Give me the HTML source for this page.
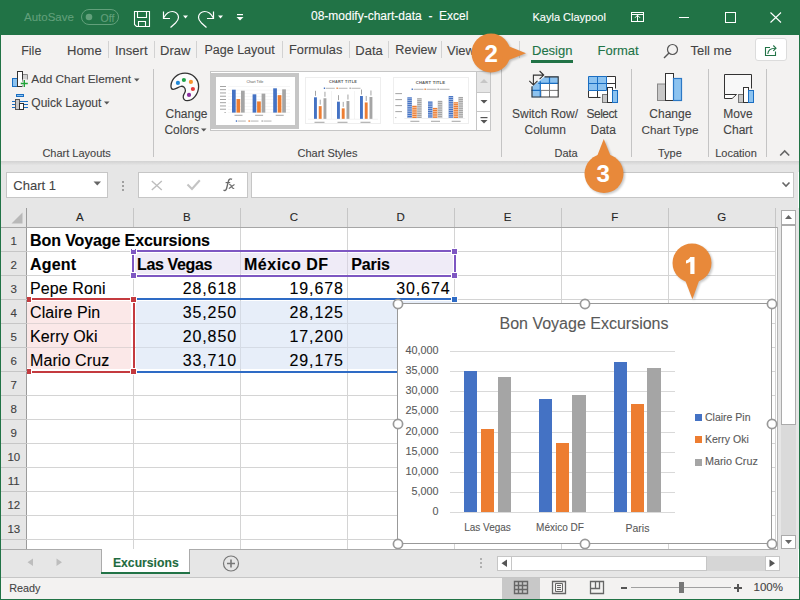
<!DOCTYPE html>
<html><head><meta charset="utf-8"><style>
html,body{margin:0;padding:0;width:800px;height:600px;overflow:hidden;background:#fff;}
body{position:relative;font-family:"Liberation Sans", sans-serif;}
.t{position:absolute;line-height:1;white-space:pre;-webkit-text-stroke:0.1px currentColor;}
.r{position:absolute;box-sizing:border-box;}
svg.r{overflow:visible;}
</style></head><body>
<div class="r" style="left:0px;top:0px;width:800px;height:35px;background:#217346;"></div>
<div class="t" style="left:24.00px;top:11.67px;font-size:11.5px;color:#62a07b;">AutoSave</div>
<svg class="r" style="left:80px;top:8px;" width="40" height="18" viewBox="0 0 40 18"><rect x="1.5" y="1.5" width="37" height="15" rx="7.5" fill="none" stroke="#62a07b" stroke-width="1"/><circle cx="9" cy="9" r="3.3" fill="#62a07b"/></svg>
<div class="t" style="left:100.50px;top:12.51px;font-size:10.5px;color:#62a07b;">Off</div>
<svg class="r" style="left:133px;top:10px;" width="18" height="18" viewBox="0 0 18 18"><path d="M1.5 1.5 H16.5 V16.5 H3.5 L1.5 14.5 Z" fill="none" stroke="#fff" stroke-width="1.1"/><path d="M4.5 1.5 V7.5 H13.5 V1.5" fill="none" stroke="#fff" stroke-width="1.1"/><path d="M5.5 16.5 V11.5 H12.5 V16.5" fill="none" stroke="#fff" stroke-width="1.1"/></svg>
<svg class="r" style="left:160px;top:10px;" width="30" height="20" viewBox="0 0 30 20"><path d="M3.5 1.5 V8.5 H10" fill="none" stroke="#fff" stroke-width="1.2"/><path d="M4 7.5 C6 3.5 9.5 1.5 12.5 1.5 C15.5 1.5 18.5 4 18.5 7.5 C18.5 10 17 11.5 15.5 13 L10.5 17.5" fill="none" stroke="#fff" stroke-width="1.2"/><path d="M23 5.5 H28 L25.5 8.5 Z" fill="#fff"/></svg>
<svg class="r" style="left:196px;top:10px;" width="30" height="20" viewBox="0 0 30 20"><path d="M17.5 1.5 V8.5 H11" fill="none" stroke="#fff" stroke-width="1.2"/><path d="M17 7.5 C15 3.5 11.5 1.5 8.5 1.5 C5.5 1.5 2.5 4 2.5 7.5 C2.5 10 4 11.5 5.5 13 L10.5 17.5" fill="none" stroke="#fff" stroke-width="1.2"/><path d="M22 5.5 H27 L24.5 8.5 Z" fill="#fff"/></svg>
<svg class="r" style="left:236px;top:13px;" width="9" height="10" viewBox="0 0 9 10"><rect x="1" y="1" width="6" height="1.2" fill="#fff"/><path d="M0.5 4 H7.5 L4 7.5 Z" fill="#fff"/></svg>
<div class="t" style="left:311.00px;top:9.84px;font-size:12px;color:#ffffff;">08-modify-chart-data  -  Excel</div>
<div class="t" style="left:532.50px;top:12.19px;font-size:11px;color:#ffffff;">Kayla Claypool</div>
<svg class="r" style="left:630px;top:12px;" width="15" height="11" viewBox="0 0 15 11"><rect x="1.5" y="0.5" width="12" height="9" fill="none" stroke="#fff" stroke-width="1"/><path d="M1.5 2.5 H13.5" stroke="#fff" stroke-width="1"/><path d="M7.5 9.5 V3.2 M5 5.8 L7.5 3.2 L10 5.8" fill="none" stroke="#fff" stroke-width="1"/></svg>
<div class="r" style="left:679px;top:17px;width:10px;height:1px;background:#fff;"></div>
<svg class="r" style="left:725px;top:12px;" width="11" height="11" viewBox="0 0 11 11"><rect x="0.5" y="0.5" width="10" height="10" fill="none" stroke="#fff" stroke-width="1"/></svg>
<svg class="r" style="left:770px;top:12px;" width="12" height="11" viewBox="0 0 12 11"><path d="M0.5 0.5 L11 10.5 M11 0.5 L0.5 10.5" stroke="#fff" stroke-width="1.1"/></svg>
<div class="r" style="left:0px;top:35px;width:800px;height:126px;background:#f3f2f1;"></div>
<div class="r" style="left:0px;top:35px;width:1px;height:565px;background:#217346;"></div>
<div class="r" style="left:799px;top:35px;width:1px;height:565px;background:#217346;"></div>
<div class="t" style="left:21.20px;top:44.62px;font-size:12.5px;color:#444444;">File</div>
<div class="t" style="left:67.00px;top:43.70px;font-size:13px;color:#444444;">Home</div>
<div class="t" style="left:115.00px;top:43.70px;font-size:13px;color:#444444;">Insert</div>
<div class="t" style="left:160.00px;top:43.70px;font-size:13px;color:#444444;">Draw</div>
<div class="t" style="left:204.50px;top:44.12px;font-size:12.5px;color:#444444;">Page Layout</div>
<div class="t" style="left:289.00px;top:43.86px;font-size:12.8px;color:#444444;">Formulas</div>
<div class="t" style="left:355.30px;top:43.70px;font-size:13px;color:#444444;">Data</div>
<div class="t" style="left:395.30px;top:44.03px;font-size:12.6px;color:#444444;">Review</div>
<div class="t" style="left:447.00px;top:43.70px;font-size:13px;color:#444444;">View</div>
<div class="r" style="left:108px;top:41px;width:1px;height:17px;background:#d2d2d2;"></div>
<div class="r" style="left:154px;top:41px;width:1px;height:17px;background:#d2d2d2;"></div>
<div class="r" style="left:196px;top:41px;width:1px;height:17px;background:#d2d2d2;"></div>
<div class="r" style="left:282px;top:41px;width:1px;height:17px;background:#d2d2d2;"></div>
<div class="r" style="left:349px;top:41px;width:1px;height:17px;background:#d2d2d2;"></div>
<div class="r" style="left:388px;top:41px;width:1px;height:17px;background:#d2d2d2;"></div>
<div class="r" style="left:441px;top:41px;width:1px;height:17px;background:#d2d2d2;"></div>
<div class="r" style="left:519px;top:41px;width:1px;height:17px;background:#d2d2d2;"></div>
<div class="t" style="left:532.00px;top:43.60px;font-size:13px;color:#217346;">Design</div>
<div class="r" style="left:531px;top:60px;width:42px;height:3px;background:#217346;"></div>
<div class="t" style="left:597.50px;top:43.60px;font-size:13px;color:#217346;">Format</div>
<svg class="r" style="left:663px;top:43px;" width="16" height="16" viewBox="0 0 16 16"><circle cx="9.5" cy="6.5" r="5" fill="none" stroke="#555" stroke-width="1.2"/><path d="M6 10 L1 15" stroke="#555" stroke-width="1.4"/></svg>
<div class="t" style="left:690.50px;top:43.60px;font-size:13px;color:#444444;">Tell me</div>
<svg class="r" style="left:755px;top:38px;" width="32" height="23" viewBox="0 0 32 23"><rect x="0.5" y="0.5" width="31" height="22" rx="2.5" fill="#fff" stroke="#dcdcdc"/><path d="M15 9.5 H10.5 V17.5 H20.5 V13.5" fill="none" stroke="#217346" stroke-width="1.1"/><path d="M12.8 16 C13 12.2 15.5 10.2 20.5 10.2" fill="none" stroke="#217346" stroke-width="1.1"/><path d="M18.3 7.5 L21 10.2 L18.3 12.9" fill="none" stroke="#217346" stroke-width="1.1"/></svg>
<div class="r" style="left:153px;top:69px;width:1px;height:88px;background:#c4c4c4;"></div>
<div class="r" style="left:501px;top:69px;width:1px;height:88px;background:#c4c4c4;"></div>
<div class="r" style="left:631px;top:69px;width:1px;height:88px;background:#c4c4c4;"></div>
<div class="r" style="left:708px;top:69px;width:1px;height:88px;background:#c4c4c4;"></div>
<div class="r" style="left:766px;top:69px;width:1px;height:88px;background:#c4c4c4;"></div>
<div class="t" style="left:42.40px;top:148.29px;font-size:11px;color:#444444;">Chart Layouts</div>
<div class="t" style="left:297.50px;top:148.29px;font-size:11px;color:#444444;">Chart Styles</div>
<div class="t" style="left:554.50px;top:148.29px;font-size:11px;color:#444444;">Data</div>
<div class="t" style="left:658.00px;top:148.29px;font-size:11px;color:#444444;">Type</div>
<div class="t" style="left:715.20px;top:148.29px;font-size:11px;color:#444444;">Location</div>
<svg class="r" style="left:779px;top:149px;" width="12" height="8" viewBox="0 0 12 8"><path d="M1.2 6.5 L5.7 2 L10.2 6.5" fill="none" stroke="#666" stroke-width="1.6"/></svg>
<div class="r" style="left:1px;top:161px;width:798px;height:11px;background:linear-gradient(#d2d2d2,#e6e6e6 40%,#e6e6e6)"></div>
<svg class="r" style="left:11px;top:70px;" width="20" height="18" viewBox="0 0 20 18"><rect x="1.5" y="8.5" width="5" height="8" fill="#8cc3f0" stroke="#1a6ec2" stroke-width="1"/><path d="M11.5 9.5 V4.5 H16.5 V9.5" fill="#d0d0d0" stroke="#8a8a8a" stroke-width="1"/><rect x="6.5" y="1.5" width="5" height="15" fill="#fff" stroke="#333" stroke-width="1"/><path d="M9.2 13.5 H17.3 M13.25 9.5 V17.5" stroke="#f3f2f1" stroke-width="3.6"/><path d="M9.8 13.5 H16.8 M13.3 10 V17" stroke="#21a33a" stroke-width="1.4"/></svg>
<div class="t" style="left:31.30px;top:74.01px;font-size:11.8px;color:#444444;">Add Chart Element</div>
<svg class="r" style="left:133.5px;top:78px;" width="6" height="4" viewBox="0 0 6 4"><path d="M0 0.5 H5.5 L2.75 3.5 Z" fill="#555"/></svg>
<svg class="r" style="left:11px;top:93px;" width="18" height="18" viewBox="0 0 18 18"><rect x="5.5" y="1.5" width="7" height="2" fill="#8cc3f0" stroke="#1a6ec2" stroke-width="1"/><path d="M1 8.5 H17 M1 11.5 H17 M1 14.5 H17" stroke="#1a6ec2" stroke-width="1"/><rect x="4.5" y="6.5" width="4" height="10" fill="#c8c8c8" stroke="#555" stroke-width="1"/><rect x="8.5" y="10.5" width="4" height="6" fill="#fff" stroke="#333" stroke-width="1"/></svg>
<div class="t" style="left:31.30px;top:96.84px;font-size:12px;color:#444444;">Quick Layout</div>
<svg class="r" style="left:103.5px;top:101px;" width="6" height="4" viewBox="0 0 6 4"><path d="M0 0.5 H5.5 L2.75 3.5 Z" fill="#555"/></svg>
<svg class="r" style="left:169px;top:72px;" width="32" height="30" viewBox="0 0 32 30"><path d="M16 1.2 C23.5 1.2 29.6 7 29.6 14.6 C29.6 22.5 23.5 28.7 18.2 28.7 C15.5 28.7 13.8 26.5 14.3 24 C14.8 21.5 16.5 20.5 16.4 18.5 C16.3 15.5 14 13.5 11.5 14.5 C8.5 15.5 6.5 17.5 4 17.3 C2.5 17.2 1.8 15.5 2 13.4 C2.5 6.5 8.5 1.2 16 1.2 Z" fill="#fcfcfc" stroke="#333" stroke-width="1.3"/><circle cx="8.9" cy="10.9" r="2.1" fill="#1f88d8"/><circle cx="14.9" cy="8" r="2.1" fill="#20a348"/><circle cx="21.9" cy="9.9" r="2.1" fill="#f7942e"/><circle cx="23.9" cy="17" r="2.1" fill="#e63a3a"/><circle cx="20" cy="22.9" r="2.1" fill="#8c2fa0"/></svg>
<div class="t" style="left:165.50px;top:107.84px;font-size:12px;color:#444444;">Change</div>
<div class="t" style="left:164.40px;top:123.84px;font-size:12px;color:#444444;">Colors</div>
<svg class="r" style="left:200.5px;top:128px;" width="6" height="4" viewBox="0 0 6 4"><path d="M0 0.5 H5.5 L2.75 3.5 Z" fill="#555"/></svg>
<div class="r" style="left:210px;top:71px;width:281px;height:60px;background:#fff;border:1px solid #c6c6c6;"></div>
<div class="r" style="left:211px;top:73px;width:88px;height:56px;background:#c6c6c6;"></div>
<div class="r" style="left:216px;top:77px;width:79px;height:48px;background:#fff;"></div>
<svg class="r" style="left:216px;top:77px;" width="79" height="48" viewBox="0 0 79 48"><text x="39" y="6" font-size="3.7" fill="#555" text-anchor="middle" font-family="Liberation Sans">Chart Title</text><rect x="12" y="35.6" width="62" height="0.4" fill="#e8e8e8"/><rect x="8.5" y="35" width="1.2" height="0.9" fill="#9a9a9a"/><rect x="12" y="32.35" width="62" height="0.4" fill="#e8e8e8"/><rect x="4" y="31.75" width="6" height="0.9" fill="#9a9a9a"/><rect x="12" y="29.1" width="62" height="0.4" fill="#e8e8e8"/><rect x="4" y="28.5" width="6" height="0.9" fill="#9a9a9a"/><rect x="12" y="25.85" width="62" height="0.4" fill="#e8e8e8"/><rect x="4" y="25.25" width="6" height="0.9" fill="#9a9a9a"/><rect x="12" y="22.6" width="62" height="0.4" fill="#e8e8e8"/><rect x="4" y="22" width="6" height="0.9" fill="#9a9a9a"/><rect x="12" y="19.35" width="62" height="0.4" fill="#e8e8e8"/><rect x="4" y="18.75" width="6" height="0.9" fill="#9a9a9a"/><rect x="12" y="16.1" width="62" height="0.4" fill="#e8e8e8"/><rect x="4" y="15.5" width="6" height="0.9" fill="#9a9a9a"/><rect x="12" y="12.85" width="62" height="0.4" fill="#e8e8e8"/><rect x="4" y="12.25" width="6" height="0.9" fill="#9a9a9a"/><rect x="12" y="9.6" width="62" height="0.4" fill="#e8e8e8"/><rect x="4" y="9" width="6" height="0.9" fill="#9a9a9a"/><rect x="16" y="12.6875" width="3.7" height="22.9125" fill="#4472c4"/><rect x="20.5" y="22.0475" width="3.7" height="13.5525" fill="#ed7d31"/><rect x="25" y="13.6885" width="3.7" height="21.9115" fill="#a5a5a5"/><rect x="18.5" y="37.8" width="8" height="0.9" fill="#999"/><rect x="36.6" y="17.3188" width="3.7" height="18.2812" fill="#4472c4"/><rect x="41.1" y="24.42" width="3.7" height="11.18" fill="#ed7d31"/><rect x="45.6" y="16.6363" width="3.7" height="18.9638" fill="#a5a5a5"/><rect x="39.1" y="37.8" width="8" height="0.9" fill="#999"/><rect x="57.2" y="11.316" width="3.7" height="24.284" fill="#4472c4"/><rect x="61.7" y="18.1475" width="3.7" height="17.4525" fill="#ed7d31"/><rect x="66.2" y="12.33" width="3.7" height="23.27" fill="#a5a5a5"/><rect x="59.7" y="37.8" width="8" height="0.9" fill="#999"/><rect x="19.8" y="43.3" width="1.3" height="1.5" fill="#4472c4"/><rect x="21.8" y="43.6" width="8" height="0.9" fill="#aaa"/><rect x="32.5" y="43.3" width="1.3" height="1.5" fill="#ed7d31"/><rect x="34.5" y="43.6" width="8" height="0.9" fill="#aaa"/><rect x="45.5" y="43.3" width="1.3" height="1.5" fill="#a5a5a5"/><rect x="47.5" y="43.6" width="8" height="0.9" fill="#aaa"/></svg>
<svg class="r" style="left:305px;top:77px;" width="76" height="47" viewBox="0 0 76 47"><text x="38" y="6" font-size="3.8" font-weight="bold" fill="#5a5a5a" text-anchor="middle" font-family="Liberation Sans" letter-spacing="0.3">CHART TITLE</text><rect x="18.8" y="10.5" width="1.3" height="1.5" fill="#4472c4"/><rect x="20.8" y="10.8" width="9" height="0.9" fill="#b0b0b0"/><rect x="31.5" y="10.5" width="1.3" height="1.5" fill="#ed7d31"/><rect x="33.5" y="10.8" width="9" height="0.9" fill="#b0b0b0"/><rect x="44.5" y="10.5" width="1.3" height="1.5" fill="#a5a5a5"/><rect x="46.5" y="10.8" width="9" height="0.9" fill="#b0b0b0"/><rect x="9" y="20.3094" width="2.9" height="21.5906" fill="#4472c4"/><rect x="10" y="13.8094" width="0.9" height="5" fill="#9a9a9a"/><rect x="13.75" y="29.1294" width="2.9" height="12.7706" fill="#ed7d31"/><rect x="14.75" y="22.6294" width="0.9" height="5" fill="#9a9a9a"/><rect x="18.5" y="21.2526" width="2.9" height="20.6474" fill="#a5a5a5"/><rect x="19.5" y="14.7526" width="0.9" height="5" fill="#9a9a9a"/><rect x="9.5" y="44.8" width="10" height="0.9" fill="#999"/><rect x="32" y="24.6734" width="2.9" height="17.2266" fill="#4472c4"/><rect x="33" y="18.1734" width="0.9" height="5" fill="#9a9a9a"/><rect x="36.75" y="31.365" width="2.9" height="10.535" fill="#ed7d31"/><rect x="37.75" y="24.865" width="0.9" height="5" fill="#9a9a9a"/><rect x="41.5" y="24.0303" width="2.9" height="17.8697" fill="#a5a5a5"/><rect x="42.5" y="17.5303" width="0.9" height="5" fill="#9a9a9a"/><rect x="26.2" y="14" width="0.4" height="28" fill="#e4e4e4"/><rect x="32.5" y="44.8" width="10" height="0.9" fill="#999"/><rect x="55" y="19.017" width="2.9" height="22.883" fill="#4472c4"/><rect x="56" y="12.517" width="0.9" height="5" fill="#9a9a9a"/><rect x="59.75" y="25.4544" width="2.9" height="16.4456" fill="#ed7d31"/><rect x="60.75" y="18.9544" width="0.9" height="5" fill="#9a9a9a"/><rect x="64.5" y="19.9725" width="2.9" height="21.9275" fill="#a5a5a5"/><rect x="65.5" y="13.4725" width="0.9" height="5" fill="#9a9a9a"/><rect x="49.2" y="14" width="0.4" height="28" fill="#e4e4e4"/><rect x="55.5" y="44.8" width="10" height="0.9" fill="#999"/><rect x="3" y="41.9" width="70" height="0.4" fill="#e0e0e0"/></svg>
<div class="r" style="left:305px;top:77px;width:76px;height:47px;background:transparent;border:1px solid #eee;"></div>
<svg class="r" style="left:393px;top:77px;" width="76" height="47" viewBox="0 0 76 47"><text x="37.5" y="7" font-size="4.2" font-weight="bold" fill="#5a5a5a" text-anchor="middle" font-family="Liberation Sans" letter-spacing="0.2">CHART TITLE</text><rect x="18.6" y="11.5" width="1.3" height="1.5" fill="#4472c4"/><rect x="20.6" y="11.8" width="10" height="0.9" fill="#b0b0b0"/><rect x="31.5" y="11.5" width="1.3" height="1.5" fill="#ed7d31"/><rect x="33.5" y="11.8" width="10" height="0.9" fill="#b0b0b0"/><rect x="44.5" y="11.5" width="1.3" height="1.5" fill="#a5a5a5"/><rect x="46.5" y="11.8" width="10" height="0.9" fill="#b0b0b0"/><rect x="2.3" y="40.2" width="1" height="0.9" fill="#9a9a9a"/><rect x="2.3" y="34.2" width="6.7" height="0.9" fill="#9a9a9a"/><rect x="2.3" y="28.2" width="6.7" height="0.9" fill="#9a9a9a"/><rect x="2.3" y="22.2" width="6.7" height="0.9" fill="#9a9a9a"/><rect x="2.3" y="16.2" width="6.7" height="0.9" fill="#9a9a9a"/><rect x="11.3" y="41.1" width="61" height="0.4" fill="#d8d8d8"/><rect x="14.35" y="20.2906" width="4.5" height="20.7094" fill="#4472c4"/><rect x="14.35" y="21.5906" width="4.5" height="0.55" fill="#fff" opacity="0.85"/><rect x="14.35" y="23.4406" width="4.5" height="0.55" fill="#fff" opacity="0.85"/><rect x="14.35" y="25.2906" width="4.5" height="0.55" fill="#fff" opacity="0.85"/><rect x="14.35" y="27.1406" width="4.5" height="0.55" fill="#fff" opacity="0.85"/><rect x="14.35" y="28.9906" width="4.5" height="0.55" fill="#fff" opacity="0.85"/><rect x="14.35" y="30.8406" width="4.5" height="0.55" fill="#fff" opacity="0.85"/><rect x="14.35" y="32.6906" width="4.5" height="0.55" fill="#fff" opacity="0.85"/><rect x="14.35" y="34.5406" width="4.5" height="0.55" fill="#fff" opacity="0.85"/><rect x="14.35" y="36.3906" width="4.5" height="0.55" fill="#fff" opacity="0.85"/><rect x="14.35" y="38.2406" width="4.5" height="0.55" fill="#fff" opacity="0.85"/><rect x="14.35" y="40.0906" width="4.5" height="0.55" fill="#fff" opacity="0.85"/><rect x="19.25" y="28.7506" width="4.5" height="12.2494" fill="#ed7d31"/><rect x="19.25" y="30.0506" width="4.5" height="0.55" fill="#fff" opacity="0.85"/><rect x="19.25" y="31.9006" width="4.5" height="0.55" fill="#fff" opacity="0.85"/><rect x="19.25" y="33.7506" width="4.5" height="0.55" fill="#fff" opacity="0.85"/><rect x="19.25" y="35.6006" width="4.5" height="0.55" fill="#fff" opacity="0.85"/><rect x="19.25" y="37.4506" width="4.5" height="0.55" fill="#fff" opacity="0.85"/><rect x="19.25" y="39.3006" width="4.5" height="0.55" fill="#fff" opacity="0.85"/><rect x="24.15" y="21.1954" width="4.5" height="19.8046" fill="#a5a5a5"/><rect x="24.15" y="22.4954" width="4.5" height="0.55" fill="#fff" opacity="0.85"/><rect x="24.15" y="24.3454" width="4.5" height="0.55" fill="#fff" opacity="0.85"/><rect x="24.15" y="26.1954" width="4.5" height="0.55" fill="#fff" opacity="0.85"/><rect x="24.15" y="28.0454" width="4.5" height="0.55" fill="#fff" opacity="0.85"/><rect x="24.15" y="29.8954" width="4.5" height="0.55" fill="#fff" opacity="0.85"/><rect x="24.15" y="31.7454" width="4.5" height="0.55" fill="#fff" opacity="0.85"/><rect x="24.15" y="33.5954" width="4.5" height="0.55" fill="#fff" opacity="0.85"/><rect x="24.15" y="35.4454" width="4.5" height="0.55" fill="#fff" opacity="0.85"/><rect x="24.15" y="37.2954" width="4.5" height="0.55" fill="#fff" opacity="0.85"/><rect x="24.15" y="39.1454" width="4.5" height="0.55" fill="#fff" opacity="0.85"/><rect x="24.15" y="40.9954" width="4.5" height="0.55" fill="#fff" opacity="0.85"/><rect x="17.35" y="43.8" width="9" height="0.9" fill="#999"/><rect x="35" y="24.4766" width="4.5" height="16.5234" fill="#4472c4"/><rect x="35" y="25.7766" width="4.5" height="0.55" fill="#fff" opacity="0.85"/><rect x="35" y="27.6266" width="4.5" height="0.55" fill="#fff" opacity="0.85"/><rect x="35" y="29.4766" width="4.5" height="0.55" fill="#fff" opacity="0.85"/><rect x="35" y="31.3266" width="4.5" height="0.55" fill="#fff" opacity="0.85"/><rect x="35" y="33.1766" width="4.5" height="0.55" fill="#fff" opacity="0.85"/><rect x="35" y="35.0266" width="4.5" height="0.55" fill="#fff" opacity="0.85"/><rect x="35" y="36.8766" width="4.5" height="0.55" fill="#fff" opacity="0.85"/><rect x="35" y="38.7266" width="4.5" height="0.55" fill="#fff" opacity="0.85"/><rect x="35" y="40.5766" width="4.5" height="0.55" fill="#fff" opacity="0.85"/><rect x="39.9" y="30.895" width="4.5" height="10.105" fill="#ed7d31"/><rect x="39.9" y="32.195" width="4.5" height="0.55" fill="#fff" opacity="0.85"/><rect x="39.9" y="34.045" width="4.5" height="0.55" fill="#fff" opacity="0.85"/><rect x="39.9" y="35.895" width="4.5" height="0.55" fill="#fff" opacity="0.85"/><rect x="39.9" y="37.745" width="4.5" height="0.55" fill="#fff" opacity="0.85"/><rect x="39.9" y="39.595" width="4.5" height="0.55" fill="#fff" opacity="0.85"/><rect x="44.8" y="23.8597" width="4.5" height="17.1403" fill="#a5a5a5"/><rect x="44.8" y="25.1597" width="4.5" height="0.55" fill="#fff" opacity="0.85"/><rect x="44.8" y="27.0097" width="4.5" height="0.55" fill="#fff" opacity="0.85"/><rect x="44.8" y="28.8597" width="4.5" height="0.55" fill="#fff" opacity="0.85"/><rect x="44.8" y="30.7097" width="4.5" height="0.55" fill="#fff" opacity="0.85"/><rect x="44.8" y="32.5597" width="4.5" height="0.55" fill="#fff" opacity="0.85"/><rect x="44.8" y="34.4097" width="4.5" height="0.55" fill="#fff" opacity="0.85"/><rect x="44.8" y="36.2597" width="4.5" height="0.55" fill="#fff" opacity="0.85"/><rect x="44.8" y="38.1097" width="4.5" height="0.55" fill="#fff" opacity="0.85"/><rect x="44.8" y="39.9597" width="4.5" height="0.55" fill="#fff" opacity="0.85"/><rect x="38" y="43.8" width="9" height="0.9" fill="#999"/><rect x="55.65" y="19.051" width="4.5" height="21.949" fill="#4472c4"/><rect x="55.65" y="20.351" width="4.5" height="0.55" fill="#fff" opacity="0.85"/><rect x="55.65" y="22.201" width="4.5" height="0.55" fill="#fff" opacity="0.85"/><rect x="55.65" y="24.051" width="4.5" height="0.55" fill="#fff" opacity="0.85"/><rect x="55.65" y="25.901" width="4.5" height="0.55" fill="#fff" opacity="0.85"/><rect x="55.65" y="27.751" width="4.5" height="0.55" fill="#fff" opacity="0.85"/><rect x="55.65" y="29.601" width="4.5" height="0.55" fill="#fff" opacity="0.85"/><rect x="55.65" y="31.451" width="4.5" height="0.55" fill="#fff" opacity="0.85"/><rect x="55.65" y="33.301" width="4.5" height="0.55" fill="#fff" opacity="0.85"/><rect x="55.65" y="35.151" width="4.5" height="0.55" fill="#fff" opacity="0.85"/><rect x="55.65" y="37.001" width="4.5" height="0.55" fill="#fff" opacity="0.85"/><rect x="55.65" y="38.851" width="4.5" height="0.55" fill="#fff" opacity="0.85"/><rect x="55.65" y="40.701" width="4.5" height="0.55" fill="#fff" opacity="0.85"/><rect x="60.55" y="25.2256" width="4.5" height="15.7744" fill="#ed7d31"/><rect x="60.55" y="26.5256" width="4.5" height="0.55" fill="#fff" opacity="0.85"/><rect x="60.55" y="28.3756" width="4.5" height="0.55" fill="#fff" opacity="0.85"/><rect x="60.55" y="30.2256" width="4.5" height="0.55" fill="#fff" opacity="0.85"/><rect x="60.55" y="32.0756" width="4.5" height="0.55" fill="#fff" opacity="0.85"/><rect x="60.55" y="33.9256" width="4.5" height="0.55" fill="#fff" opacity="0.85"/><rect x="60.55" y="35.7756" width="4.5" height="0.55" fill="#fff" opacity="0.85"/><rect x="60.55" y="37.6256" width="4.5" height="0.55" fill="#fff" opacity="0.85"/><rect x="60.55" y="39.4756" width="4.5" height="0.55" fill="#fff" opacity="0.85"/><rect x="65.45" y="19.9675" width="4.5" height="21.0325" fill="#a5a5a5"/><rect x="65.45" y="21.2675" width="4.5" height="0.55" fill="#fff" opacity="0.85"/><rect x="65.45" y="23.1175" width="4.5" height="0.55" fill="#fff" opacity="0.85"/><rect x="65.45" y="24.9675" width="4.5" height="0.55" fill="#fff" opacity="0.85"/><rect x="65.45" y="26.8175" width="4.5" height="0.55" fill="#fff" opacity="0.85"/><rect x="65.45" y="28.6675" width="4.5" height="0.55" fill="#fff" opacity="0.85"/><rect x="65.45" y="30.5175" width="4.5" height="0.55" fill="#fff" opacity="0.85"/><rect x="65.45" y="32.3675" width="4.5" height="0.55" fill="#fff" opacity="0.85"/><rect x="65.45" y="34.2175" width="4.5" height="0.55" fill="#fff" opacity="0.85"/><rect x="65.45" y="36.0675" width="4.5" height="0.55" fill="#fff" opacity="0.85"/><rect x="65.45" y="37.9175" width="4.5" height="0.55" fill="#fff" opacity="0.85"/><rect x="65.45" y="39.7675" width="4.5" height="0.55" fill="#fff" opacity="0.85"/><rect x="58.65" y="43.8" width="9" height="0.9" fill="#999"/></svg>
<div class="r" style="left:393px;top:77px;width:76px;height:47px;background:transparent;border:1px solid #eee;"></div>
<div class="r" style="left:476px;top:71px;width:15px;height:60px;background:#fff;border:1px solid #c6c6c6;"></div>
<div class="r" style="left:477px;top:72px;width:13px;height:20px;background:#e6e6e6;"></div>
<div class="r" style="left:476px;top:92px;width:15px;height:1px;background:#c6c6c6;"></div>
<div class="r" style="left:476px;top:111px;width:15px;height:1px;background:#c6c6c6;"></div>
<svg class="r" style="left:479px;top:78px;" width="10" height="6" viewBox="0 0 10 6"><path d="M1 5 L5 1 L9 5 Z" fill="#c6c6c6"/></svg>
<svg class="r" style="left:479px;top:99px;" width="10" height="6" viewBox="0 0 10 6"><path d="M1.5 1 H8.5 L5 4.5 Z" fill="#555"/></svg>
<svg class="r" style="left:479px;top:116px;" width="10" height="9" viewBox="0 0 10 9"><rect x="1.5" y="1" width="7" height="1.2" fill="#555"/><path d="M1.5 4 H8.5 L5 7.5 Z" fill="#555"/></svg>
<svg class="r" style="left:525px;top:68px;" width="40" height="34" viewBox="0 0 40 34"><rect x="6.5" y="8.4" width="27.2" height="21.1" fill="#fff"/><rect x="6.5" y="8.4" width="27.2" height="6.9" fill="#8cc3f0"/><rect x="6.5" y="8.4" width="8.8" height="21.1" fill="#8cc3f0"/><path d="M5.5 7.5 H20 L5.5 19 Z" fill="#f3f2f1"/><path d="M6 18.6 L19.8 7.9" stroke="#fff" stroke-width="1.2"/><path d="M15.8 29 V22.4 H33.2 M24.5 15.8 V29 M15.8 22.4" fill="none" stroke="#777" stroke-width="1"/><path d="M15.3 13.3 V29 M13.3 15.3 H33.2 M6.5 22.4 H15.3 M24.5 8.9 V15.3" fill="none" stroke="#1a6ec2" stroke-width="1.2"/><path d="M19.5 8.9 H33.2 V29 H7 V18.3" fill="none" stroke="#333" stroke-width="1.1"/><path d="M18.7 7.1 H8.4 V17 M14.6 3 L18.7 7.1 L14.6 11.2 M4.3 12.9 L8.4 17 L12.5 12.9" fill="none" stroke="#333" stroke-width="1.1"/></svg>
<div class="t" style="left:512.00px;top:107.84px;font-size:12px;color:#444444;">Switch Row/</div>
<div class="t" style="left:524.50px;top:123.84px;font-size:12px;color:#444444;">Column</div>
<svg class="r" style="left:583px;top:72px;" width="40" height="34" viewBox="0 0 40 34"><rect x="5.5" y="4.5" width="27" height="20" fill="#fff"/><rect x="5.5" y="4.5" width="18" height="14" fill="#8cc3f0"/><path d="M23.5 4.5 H32.5 V16.5 M23.5 11.5 H32.5 M5.5 18.5 V25.5 H17.5 M14.5 18.5 V25.5" fill="none" stroke="#333" stroke-width="1"/><path d="M14.5 4.5 V18.5 M5.5 11.5 H23.5 M5.5 4.5 H23.5 V18.5 H5.5 Z" fill="none" stroke="#1a6ec2" stroke-width="1"/><rect x="19.5" y="22.5" width="5" height="8" fill="#c8c8c8" stroke="#777" stroke-width="1"/><rect x="24.5" y="15.5" width="5" height="15" fill="#fff" stroke="#333" stroke-width="1"/><rect x="29.5" y="18.5" width="5" height="12" fill="#8cc3f0" stroke="#1a6ec2" stroke-width="1"/></svg>
<div class="t" style="left:586.50px;top:107.84px;font-size:12px;color:#444444;letter-spacing:-0.5px;">Select</div>
<div class="t" style="left:590.50px;top:123.84px;font-size:12px;color:#444444;">Data</div>
<svg class="r" style="left:656px;top:72px;" width="28" height="30" viewBox="0 0 28 30"><rect x="1.5" y="12" width="8" height="16.5" fill="#c8c8c8" stroke="#888" stroke-width="1"/><rect x="9.5" y="1.5" width="8" height="27" fill="#fff" stroke="#333" stroke-width="1"/><rect x="17.5" y="6.5" width="8" height="22" fill="#8cc3f0" stroke="#2b78c5" stroke-width="1.2"/></svg>
<div class="t" style="left:649.30px;top:107.84px;font-size:12px;color:#444444;">Change</div>
<div class="t" style="left:641.50px;top:124.10px;font-size:11.7px;color:#444444;">Chart Type</div>
<svg class="r" style="left:718px;top:70px;" width="40" height="36" viewBox="0 0 40 36"><rect x="6.5" y="4.5" width="27" height="20" fill="#f8f8f8"/><path d="M6.5 24.5 V4.5 H33.5 V18.5 M6.5 24.5 H18.5 L14 28.5 H6.5 Z" fill="none" stroke="#333" stroke-width="1"/><path d="M7 25 H17 L13.8 28 H7 Z" fill="#fff"/><rect x="20.5" y="24.5" width="5" height="8" fill="#c8c8c8" stroke="#777" stroke-width="1"/><rect x="25.5" y="17.5" width="5" height="15" fill="#fff" stroke="#333" stroke-width="1"/><rect x="30.5" y="20.5" width="5" height="12" fill="#8cc3f0" stroke="#1a6ec2" stroke-width="1"/></svg>
<div class="t" style="left:723.30px;top:107.84px;font-size:12px;color:#444444;">Move</div>
<div class="t" style="left:723.30px;top:123.84px;font-size:12px;color:#444444;">Chart</div>
<div class="r" style="left:1px;top:172px;width:797px;height:36px;background:#e6e6e6;"></div>
<div class="r" style="left:6px;top:172px;width:102px;height:26px;background:#fff;border:1px solid #c6c6c6;"></div>
<div class="t" style="left:13.30px;top:178.80px;font-size:13px;color:#444444;">Chart 1</div>
<svg class="r" style="left:93px;top:181px;" width="9" height="6" viewBox="0 0 9 6"><path d="M0.5 0.5 H8 L4.25 4.5 Z" fill="#666"/></svg>
<div class="r" style="left:122px;top:180.5px;width:2px;height:2px;background:#a0a0a0;"></div>
<div class="r" style="left:122px;top:184.5px;width:2px;height:2px;background:#a0a0a0;"></div>
<div class="r" style="left:122px;top:188.5px;width:2px;height:2px;background:#a0a0a0;"></div>
<div class="r" style="left:138px;top:172px;width:110px;height:26px;background:#fff;border:1px solid #c6c6c6;"></div>
<svg class="r" style="left:151px;top:180px;" width="12" height="11" viewBox="0 0 12 11"><path d="M0.8 1 L10.8 10 M10.8 1 L0.8 10" stroke="#bdbdbd" stroke-width="1.4"/></svg>
<svg class="r" style="left:186px;top:178px;" width="16" height="13" viewBox="0 0 16 13"><path d="M1.5 6.5 L6 11 L13.8 2.2" fill="none" stroke="#c4c4c4" stroke-width="2.1"/></svg>
<svg class="r" style="left:220px;top:176px;" width="16" height="16" viewBox="0 0 16 16"><path d="M12 3.3 C10.5 2.3 8.8 3 8.3 5.5 L6.5 12.8 C6 14.5 4.8 14.8 3.5 14.2" fill="none" stroke="#6a6a6a" stroke-width="1.4"/><path d="M5.6 6.6 H10.2" stroke="#6a6a6a" stroke-width="1.2"/><path d="M9.2 8.6 C10.5 8.3 11 9 11.6 10.5 C12.2 12 12.8 12.7 14.2 12.4 M14.5 8.5 C12.5 9.5 10.5 11.5 8.8 12.6" fill="none" stroke="#6a6a6a" stroke-width="1.1"/></svg>
<div class="r" style="left:251px;top:172px;width:543px;height:26px;background:#fff;border:1px solid #c6c6c6;"></div>
<svg class="r" style="left:781px;top:181px;" width="10" height="7" viewBox="0 0 10 7"><path d="M1.5 1.5 L5 5 L8.5 1.5" fill="none" stroke="#666" stroke-width="1.6"/></svg>
<div class="r" style="left:1px;top:208px;width:777px;height:20px;background:#e6e6e6;"></div>
<div class="r" style="left:1px;top:228px;width:26px;height:321px;background:#e6e6e6;"></div>
<div class="r" style="left:133px;top:228px;width:1px;height:321px;background:#d4d4d4;"></div>
<div class="r" style="left:133px;top:208px;width:1px;height:20px;background:#c6c6c6;"></div>
<div class="r" style="left:240px;top:228px;width:1px;height:321px;background:#d4d4d4;"></div>
<div class="r" style="left:240px;top:208px;width:1px;height:20px;background:#c6c6c6;"></div>
<div class="r" style="left:347px;top:228px;width:1px;height:321px;background:#d4d4d4;"></div>
<div class="r" style="left:347px;top:208px;width:1px;height:20px;background:#c6c6c6;"></div>
<div class="r" style="left:454px;top:228px;width:1px;height:321px;background:#d4d4d4;"></div>
<div class="r" style="left:454px;top:208px;width:1px;height:20px;background:#c6c6c6;"></div>
<div class="r" style="left:561px;top:228px;width:1px;height:321px;background:#d4d4d4;"></div>
<div class="r" style="left:561px;top:208px;width:1px;height:20px;background:#c6c6c6;"></div>
<div class="r" style="left:668px;top:228px;width:1px;height:321px;background:#d4d4d4;"></div>
<div class="r" style="left:668px;top:208px;width:1px;height:20px;background:#c6c6c6;"></div>
<div class="r" style="left:775px;top:228px;width:1px;height:321px;background:#d4d4d4;"></div>
<div class="r" style="left:775px;top:208px;width:1px;height:20px;background:#c6c6c6;"></div>
<div class="r" style="left:26px;top:208px;width:1px;height:341px;background:#9b9b9b;"></div>
<div class="r" style="left:27px;top:251px;width:750px;height:1px;background:#d4d4d4;"></div>
<div class="r" style="left:1px;top:251px;width:26px;height:1px;background:#c6c6c6;"></div>
<div class="r" style="left:27px;top:275px;width:750px;height:1px;background:#d4d4d4;"></div>
<div class="r" style="left:1px;top:275px;width:26px;height:1px;background:#c6c6c6;"></div>
<div class="r" style="left:27px;top:299px;width:750px;height:1px;background:#d4d4d4;"></div>
<div class="r" style="left:1px;top:299px;width:26px;height:1px;background:#c6c6c6;"></div>
<div class="r" style="left:27px;top:323px;width:750px;height:1px;background:#d4d4d4;"></div>
<div class="r" style="left:1px;top:323px;width:26px;height:1px;background:#c6c6c6;"></div>
<div class="r" style="left:27px;top:347px;width:750px;height:1px;background:#d4d4d4;"></div>
<div class="r" style="left:1px;top:347px;width:26px;height:1px;background:#c6c6c6;"></div>
<div class="r" style="left:27px;top:371px;width:750px;height:1px;background:#d4d4d4;"></div>
<div class="r" style="left:1px;top:371px;width:26px;height:1px;background:#c6c6c6;"></div>
<div class="r" style="left:27px;top:395px;width:750px;height:1px;background:#d4d4d4;"></div>
<div class="r" style="left:1px;top:395px;width:26px;height:1px;background:#c6c6c6;"></div>
<div class="r" style="left:27px;top:419px;width:750px;height:1px;background:#d4d4d4;"></div>
<div class="r" style="left:1px;top:419px;width:26px;height:1px;background:#c6c6c6;"></div>
<div class="r" style="left:27px;top:443px;width:750px;height:1px;background:#d4d4d4;"></div>
<div class="r" style="left:1px;top:443px;width:26px;height:1px;background:#c6c6c6;"></div>
<div class="r" style="left:27px;top:467px;width:750px;height:1px;background:#d4d4d4;"></div>
<div class="r" style="left:1px;top:467px;width:26px;height:1px;background:#c6c6c6;"></div>
<div class="r" style="left:27px;top:491px;width:750px;height:1px;background:#d4d4d4;"></div>
<div class="r" style="left:1px;top:491px;width:26px;height:1px;background:#c6c6c6;"></div>
<div class="r" style="left:27px;top:515px;width:750px;height:1px;background:#d4d4d4;"></div>
<div class="r" style="left:1px;top:515px;width:26px;height:1px;background:#c6c6c6;"></div>
<div class="r" style="left:27px;top:539px;width:750px;height:1px;background:#d4d4d4;"></div>
<div class="r" style="left:1px;top:539px;width:26px;height:1px;background:#c6c6c6;"></div>
<div class="r" style="left:1px;top:227px;width:777px;height:1px;background:#a6a6a6;"></div>
<div class="r" style="left:776px;top:228px;width:1px;height:321px;background:#fff;"></div>
<div class="r" style="left:777px;top:227px;width:1px;height:322px;background:#b4b4b4;"></div>
<svg class="r" style="left:11px;top:212px;" width="12" height="12" viewBox="0 0 12 12"><path d="M11.5 0.5 V11.5 H0.5 Z" fill="#b8b8b8"/></svg>
<div class="t" style="left:-120.25px;width:400px;text-align:center;top:212.27px;font-size:11.5px;color:#262626;">A</div>
<div class="t" style="left:-13.25px;width:400px;text-align:center;top:212.27px;font-size:11.5px;color:#262626;">B</div>
<div class="t" style="left:93.90px;width:400px;text-align:center;top:212.27px;font-size:11.5px;color:#262626;">C</div>
<div class="t" style="left:200.65px;width:400px;text-align:center;top:212.27px;font-size:11.5px;color:#262626;">D</div>
<div class="t" style="left:307.50px;width:400px;text-align:center;top:212.27px;font-size:11.5px;color:#262626;">E</div>
<div class="t" style="left:414.70px;width:400px;text-align:center;top:212.27px;font-size:11.5px;color:#262626;">F</div>
<div class="t" style="left:521.70px;width:400px;text-align:center;top:212.27px;font-size:11.5px;color:#262626;">G</div>
<div class="t" style="left:-186.20px;width:400px;text-align:center;top:236.47px;font-size:11.5px;color:#404040;">1</div>
<div class="t" style="left:-186.20px;width:400px;text-align:center;top:260.47px;font-size:11.5px;color:#404040;">2</div>
<div class="t" style="left:-186.20px;width:400px;text-align:center;top:284.47px;font-size:11.5px;color:#404040;">3</div>
<div class="t" style="left:-186.20px;width:400px;text-align:center;top:308.47px;font-size:11.5px;color:#404040;">4</div>
<div class="t" style="left:-186.20px;width:400px;text-align:center;top:332.47px;font-size:11.5px;color:#404040;">5</div>
<div class="t" style="left:-186.20px;width:400px;text-align:center;top:356.47px;font-size:11.5px;color:#404040;">6</div>
<div class="t" style="left:-186.20px;width:400px;text-align:center;top:380.47px;font-size:11.5px;color:#404040;">7</div>
<div class="t" style="left:-186.20px;width:400px;text-align:center;top:404.47px;font-size:11.5px;color:#404040;">8</div>
<div class="t" style="left:-186.20px;width:400px;text-align:center;top:428.47px;font-size:11.5px;color:#404040;">9</div>
<div class="t" style="left:-186.20px;width:400px;text-align:center;top:452.47px;font-size:11.5px;color:#404040;">10</div>
<div class="t" style="left:-186.20px;width:400px;text-align:center;top:476.47px;font-size:11.5px;color:#404040;">11</div>
<div class="t" style="left:-186.20px;width:400px;text-align:center;top:500.47px;font-size:11.5px;color:#404040;">12</div>
<div class="t" style="left:-186.20px;width:400px;text-align:center;top:524.47px;font-size:11.5px;color:#404040;">13</div>
<div class="r" style="left:778px;top:208px;width:21px;height:341px;background:#e6e6e6;"></div>
<div class="r" style="left:781px;top:210px;width:15px;height:15px;background:#fff;border:1px solid #ababab;"></div>
<svg class="r" style="left:784px;top:214px;" width="10" height="6" viewBox="0 0 10 6"><path d="M1 5 L4.5 1 L8 5 Z" fill="#666"/></svg>
<div class="r" style="left:781px;top:425px;width:15px;height:110px;background:#dadada;"></div>
<div class="r" style="left:781px;top:225px;width:15px;height:200px;background:#fff;border:1px solid #ababab;"></div>
<div class="r" style="left:781px;top:535px;width:15px;height:14px;background:#fff;border:1px solid #ababab;"></div>
<svg class="r" style="left:784px;top:539px;" width="10" height="6" viewBox="0 0 10 6"><path d="M1 1 H8 L4.5 5 Z" fill="#666"/></svg>
<div class="r" style="left:135px;top:253px;width:318px;height:21px;background:#efebf7;"></div>
<div class="r" style="left:27px;top:301px;width:104px;height:68px;background:#fbe8e8;"></div>
<div class="r" style="left:136px;top:301px;width:318px;height:68px;background:#e7eef9;"></div>
<div class="r" style="left:27px;top:323px;width:104px;height:1px;background:#e0d4d4;"></div>
<div class="r" style="left:136px;top:323px;width:318px;height:1px;background:#d5dbe5;"></div>
<div class="r" style="left:27px;top:347px;width:104px;height:1px;background:#e0d4d4;"></div>
<div class="r" style="left:136px;top:347px;width:318px;height:1px;background:#d5dbe5;"></div>
<div class="r" style="left:240px;top:253px;width:1px;height:21px;background:#d8d4e0;"></div>
<div class="r" style="left:240px;top:301px;width:1px;height:68px;background:#d5dbe5;"></div>
<div class="r" style="left:347px;top:253px;width:1px;height:21px;background:#d8d4e0;"></div>
<div class="r" style="left:347px;top:301px;width:1px;height:68px;background:#d5dbe5;"></div>
<div class="r" style="left:132px;top:250px;width:324px;height:2px;background:#7e57c2;"></div>
<div class="r" style="left:132px;top:275px;width:324px;height:2px;background:#7e57c2;"></div>
<div class="r" style="left:132px;top:250px;width:2px;height:27px;background:#7e57c2;"></div>
<div class="r" style="left:454px;top:250px;width:2px;height:27px;background:#7e57c2;"></div>
<div class="r" style="left:27px;top:298px;width:108px;height:2px;background:#c43a3f;"></div>
<div class="r" style="left:27px;top:371px;width:108px;height:2px;background:#c43a3f;"></div>
<div class="r" style="left:133px;top:298px;width:2px;height:75px;background:#c43a3f;"></div>
<div class="r" style="left:137px;top:298px;width:319px;height:2px;background:#2e6bc5;"></div>
<div class="r" style="left:137px;top:371px;width:261px;height:2px;background:#2e6bc5;"></div>
<div class="r" style="left:130px;top:248px;width:7px;height:7px;background:#fff;"></div>
<div class="r" style="left:131px;top:249px;width:5px;height:5px;background:#7e57c2;"></div>
<div class="r" style="left:451px;top:248px;width:7px;height:7px;background:#fff;"></div>
<div class="r" style="left:452px;top:249px;width:5px;height:5px;background:#7e57c2;"></div>
<div class="r" style="left:130px;top:272px;width:7px;height:7px;background:#fff;"></div>
<div class="r" style="left:131px;top:273px;width:5px;height:5px;background:#7e57c2;"></div>
<div class="r" style="left:451px;top:272px;width:7px;height:7px;background:#fff;"></div>
<div class="r" style="left:452px;top:273px;width:5px;height:5px;background:#7e57c2;"></div>
<div class="r" style="left:130px;top:296px;width:7px;height:7px;background:#fff;"></div>
<div class="r" style="left:131px;top:297px;width:5px;height:5px;background:#c43a3f;"></div>
<div class="r" style="left:130px;top:368px;width:7px;height:7px;background:#fff;"></div>
<div class="r" style="left:131px;top:369px;width:5px;height:5px;background:#c43a3f;"></div>
<div class="r" style="left:27px;top:296px;width:5px;height:7px;background:#fff;"></div>
<div class="r" style="left:27px;top:297px;width:4px;height:5px;background:#c43a3f;"></div>
<div class="r" style="left:27px;top:368px;width:5px;height:7px;background:#fff;"></div>
<div class="r" style="left:27px;top:369px;width:4px;height:5px;background:#c43a3f;"></div>
<div class="r" style="left:27px;top:298px;width:2px;height:2px;background:#c43a3f;"></div>
<div class="r" style="left:27px;top:371px;width:2px;height:2px;background:#c43a3f;"></div>
<div class="r" style="left:451px;top:296px;width:7px;height:7px;background:#fff;"></div>
<div class="r" style="left:452px;top:297px;width:5px;height:5px;background:#2e6bc5;"></div>
<div class="r" style="left:132px;top:228px;width:3px;height:22px;background:#fff;"></div>
<div class="t" style="left:30.00px;top:232.86px;font-size:16px;color:#000000;font-weight:700;letter-spacing:-0.1px;">Bon Voyage Excursions</div>
<div class="t" style="left:30.00px;top:256.86px;font-size:16px;color:#000000;font-weight:700;letter-spacing:0.2px;">Agent</div>
<div class="t" style="left:137.00px;top:256.86px;font-size:16px;color:#000000;font-weight:700;letter-spacing:-0.35px;">Las Vegas</div>
<div class="t" style="left:244.00px;top:256.86px;font-size:16px;color:#000000;font-weight:700;letter-spacing:0.5px;">México DF</div>
<div class="t" style="left:351.30px;top:256.86px;font-size:16px;color:#000000;font-weight:700;letter-spacing:-0.15px;">Paris</div>
<div class="t" style="left:30.00px;top:280.86px;font-size:16px;color:#000000;letter-spacing:0.1px;">Pepe Roni</div>
<div class="t" style="right:563.00px;top:280.86px;font-size:16px;color:#000000;letter-spacing:0.9px;">28,618</div>
<div class="t" style="right:456.20px;top:280.86px;font-size:16px;color:#000000;letter-spacing:0.9px;">19,678</div>
<div class="t" style="right:349.50px;top:280.86px;font-size:16px;color:#000000;letter-spacing:0.9px;">30,674</div>
<div class="t" style="left:30.00px;top:304.86px;font-size:16px;color:#000000;letter-spacing:0.1px;">Claire Pin</div>
<div class="t" style="right:563.00px;top:304.86px;font-size:16px;color:#000000;letter-spacing:0.9px;">35,250</div>
<div class="t" style="right:456.20px;top:304.86px;font-size:16px;color:#000000;letter-spacing:0.9px;">28,125</div>
<div class="t" style="left:30.00px;top:328.86px;font-size:16px;color:#000000;letter-spacing:0.1px;">Kerry Oki</div>
<div class="t" style="right:563.00px;top:328.86px;font-size:16px;color:#000000;letter-spacing:0.9px;">20,850</div>
<div class="t" style="right:456.20px;top:328.86px;font-size:16px;color:#000000;letter-spacing:0.9px;">17,200</div>
<div class="t" style="left:30.00px;top:352.86px;font-size:16px;color:#000000;letter-spacing:0.1px;">Mario Cruz</div>
<div class="t" style="right:563.00px;top:352.86px;font-size:16px;color:#000000;letter-spacing:0.9px;">33,710</div>
<div class="t" style="right:456.20px;top:352.86px;font-size:16px;color:#000000;letter-spacing:0.9px;">29,175</div>
<div class="r" style="left:397px;top:303px;width:375px;height:241px;background:#fff;border:1px solid #999;"></div>
<div class="t" style="left:384.00px;width:400px;text-align:center;top:316.46px;font-size:16px;color:#595959;">Bon Voyage Excursions</div>
<div class="r" style="left:450px;top:512px;width:225px;height:1px;background:#d9d9d9;"></div>
<div class="t" style="right:361.40px;top:506.46px;font-size:10.8px;color:#595959;">0</div>
<div class="r" style="left:450px;top:492px;width:225px;height:1px;background:#d9d9d9;"></div>
<div class="t" style="right:361.40px;top:486.46px;font-size:10.8px;color:#595959;">5,000</div>
<div class="r" style="left:450px;top:472px;width:225px;height:1px;background:#d9d9d9;"></div>
<div class="t" style="right:361.40px;top:466.46px;font-size:10.8px;color:#595959;">10,000</div>
<div class="r" style="left:450px;top:452px;width:225px;height:1px;background:#d9d9d9;"></div>
<div class="t" style="right:361.40px;top:446.46px;font-size:10.8px;color:#595959;">15,000</div>
<div class="r" style="left:450px;top:432px;width:225px;height:1px;background:#d9d9d9;"></div>
<div class="t" style="right:361.40px;top:426.46px;font-size:10.8px;color:#595959;">20,000</div>
<div class="r" style="left:450px;top:411px;width:225px;height:1px;background:#d9d9d9;"></div>
<div class="t" style="right:361.40px;top:405.46px;font-size:10.8px;color:#595959;">25,000</div>
<div class="r" style="left:450px;top:391px;width:225px;height:1px;background:#d9d9d9;"></div>
<div class="t" style="right:361.40px;top:385.46px;font-size:10.8px;color:#595959;">30,000</div>
<div class="r" style="left:450px;top:371px;width:225px;height:1px;background:#d9d9d9;"></div>
<div class="t" style="right:361.40px;top:365.46px;font-size:10.8px;color:#595959;">35,000</div>
<div class="r" style="left:450px;top:351px;width:225px;height:1px;background:#d9d9d9;"></div>
<div class="t" style="right:361.40px;top:345.46px;font-size:10.8px;color:#595959;">40,000</div>
<div class="r" style="left:464.00px;top:371px;width:13.3px;height:141px;background:#4472c4"></div>
<div class="r" style="left:480.80px;top:429px;width:13.3px;height:83px;background:#ed7d31"></div>
<div class="r" style="left:497.60px;top:377px;width:13.3px;height:135px;background:#a5a5a5"></div>
<div class="r" style="left:538.85px;top:399px;width:13.3px;height:113px;background:#4472c4"></div>
<div class="r" style="left:555.65px;top:443px;width:13.3px;height:69px;background:#ed7d31"></div>
<div class="r" style="left:572.45px;top:395px;width:13.3px;height:117px;background:#a5a5a5"></div>
<div class="r" style="left:613.70px;top:362px;width:13.3px;height:150px;background:#4472c4"></div>
<div class="r" style="left:630.50px;top:404px;width:13.3px;height:108px;background:#ed7d31"></div>
<div class="r" style="left:647.30px;top:368px;width:13.3px;height:144px;background:#a5a5a5"></div>
<div class="t" style="left:287.50px;width:400px;text-align:center;top:523.03px;font-size:10px;color:#595959;">Las Vegas</div>
<div class="t" style="left:360.00px;width:400px;text-align:center;top:523.03px;font-size:10px;color:#595959;">México DF</div>
<div class="t" style="left:437.50px;width:400px;text-align:center;top:522.61px;font-size:10.5px;color:#595959;">Paris</div>
<div class="r" style="left:695px;top:414px;width:7px;height:7px;background:#4472c4;"></div>
<div class="t" style="left:705.00px;top:412.11px;font-size:10.5px;color:#595959;">Claire Pin</div>
<div class="r" style="left:695px;top:436.2px;width:7px;height:7px;background:#ed7d31;"></div>
<div class="t" style="left:705.00px;top:434.31px;font-size:10.5px;color:#595959;">Kerry Oki</div>
<div class="r" style="left:695px;top:458.6px;width:7px;height:7px;background:#a5a5a5;"></div>
<div class="t" style="left:705.00px;top:456.46px;font-size:10.8px;color:#595959;">Mario Cruz</div>
<svg class="r" style="left:390.5px;top:296.5px;" width="14" height="14" viewBox="0 0 14 14"><circle cx="7" cy="7" r="4.6" fill="#fff" stroke="#999" stroke-width="1.7"/></svg>
<svg class="r" style="left:577.5px;top:296.5px;" width="14" height="14" viewBox="0 0 14 14"><circle cx="7" cy="7" r="4.6" fill="#fff" stroke="#999" stroke-width="1.7"/></svg>
<svg class="r" style="left:764.5px;top:296.5px;" width="14" height="14" viewBox="0 0 14 14"><circle cx="7" cy="7" r="4.6" fill="#fff" stroke="#999" stroke-width="1.7"/></svg>
<svg class="r" style="left:390.5px;top:416.5px;" width="14" height="14" viewBox="0 0 14 14"><circle cx="7" cy="7" r="4.6" fill="#fff" stroke="#999" stroke-width="1.7"/></svg>
<svg class="r" style="left:764.5px;top:416.5px;" width="14" height="14" viewBox="0 0 14 14"><circle cx="7" cy="7" r="4.6" fill="#fff" stroke="#999" stroke-width="1.7"/></svg>
<svg class="r" style="left:390.5px;top:536.5px;" width="14" height="14" viewBox="0 0 14 14"><circle cx="7" cy="7" r="4.6" fill="#fff" stroke="#999" stroke-width="1.7"/></svg>
<svg class="r" style="left:577.5px;top:536.5px;" width="14" height="14" viewBox="0 0 14 14"><circle cx="7" cy="7" r="4.6" fill="#fff" stroke="#999" stroke-width="1.7"/></svg>
<svg class="r" style="left:764.5px;top:536.5px;" width="14" height="14" viewBox="0 0 14 14"><circle cx="7" cy="7" r="4.6" fill="#fff" stroke="#999" stroke-width="1.7"/></svg>
<div class="r" style="left:1px;top:549px;width:797px;height:28px;background:#e6e6e6;"></div>
<div class="r" style="left:1px;top:549px;width:100px;height:1px;background:#ababab;"></div>
<div class="r" style="left:190px;top:549px;width:588px;height:1px;background:#ababab;"></div>
<div class="r" style="left:1px;top:577px;width:798px;height:1px;background:#c6c6c6;"></div>
<svg class="r" style="left:27px;top:558px;" width="7" height="9" viewBox="0 0 7 9"><path d="M6 0.5 V8 L0.5 4.25 Z" fill="#bdbdbd"/></svg>
<svg class="r" style="left:56px;top:558px;" width="7" height="9" viewBox="0 0 7 9"><path d="M0.5 0.5 V8 L6 4.25 Z" fill="#bdbdbd"/></svg>
<div class="r" style="left:101px;top:549px;width:89px;height:25px;background:#fff;border-left:1px solid #ababab;border-right:1px solid #ababab;"></div>
<div class="r" style="left:101px;top:572px;width:89px;height:2px;background:#217346;"></div>
<div class="t" style="left:-54.20px;width:400px;text-align:center;top:557.27px;font-size:12.2px;color:#1e6b40;font-weight:700;">Excursions</div>
<svg class="r" style="left:222px;top:555px;" width="18" height="18" viewBox="0 0 18 18"><circle cx="9" cy="8.5" r="7.5" fill="none" stroke="#777" stroke-width="1.2"/><path d="M9 4.5 V12.5 M5 8.5 H13" stroke="#777" stroke-width="1.6"/></svg>
<div class="r" style="left:480px;top:558px;width:2px;height:2px;background:#b0b0b0;"></div>
<div class="r" style="left:480px;top:562px;width:2px;height:2px;background:#b0b0b0;"></div>
<div class="r" style="left:480px;top:566px;width:2px;height:2px;background:#b0b0b0;"></div>
<div class="r" style="left:497px;top:556px;width:268px;height:15px;background:#d6d6d6;"></div>
<div class="r" style="left:497px;top:556px;width:15px;height:15px;background:#fff;border:1px solid #c6c6c6;"></div>
<svg class="r" style="left:501px;top:559px;" width="7" height="9" viewBox="0 0 7 9"><path d="M6 0.5 V8 L0.5 4.25 Z" fill="#555"/></svg>
<div class="r" style="left:511px;top:556px;width:196px;height:15px;background:#fff;border:1px solid #c6c6c6;"></div>
<div class="r" style="left:765px;top:556px;width:15px;height:15px;background:#fff;border:1px solid #c6c6c6;"></div>
<svg class="r" style="left:769px;top:559px;" width="7" height="9" viewBox="0 0 7 9"><path d="M0.5 0.5 V8 L6 4.25 Z" fill="#555"/></svg>
<div class="r" style="left:1px;top:578px;width:798px;height:21px;background:#f3f2f1;"></div>
<div class="r" style="left:0px;top:599px;width:800px;height:1px;background:#217346;"></div>
<div class="t" style="left:9.30px;top:582.86px;font-size:10.8px;color:#444444;">Ready</div>
<div class="r" style="left:502px;top:578px;width:38px;height:21px;background:#c8c8c8;"></div>
<svg class="r" style="left:513px;top:580px;" width="16" height="15" viewBox="0 0 16 15"><path d="M1.5 1.5 H14.5 V13.5 H1.5 Z M1.5 5.5 H14.5 M1.5 9.5 H14.5 M5.5 1.5 V13.5 M9.5 1.5 V13.5" fill="none" stroke="#666" stroke-width="1.4"/></svg>
<svg class="r" style="left:551px;top:580px;" width="16" height="15" viewBox="0 0 16 15"><path d="M1.5 1.5 H14.5 V13.5 H1.5 Z" fill="none" stroke="#666" stroke-width="1.3"/><path d="M4.5 3.5 H11.5 V11.5 H4.5 Z M6 5.5 H10 M6 7.5 H10 M6 9.5 H10" fill="none" stroke="#666" stroke-width="1"/></svg>
<svg class="r" style="left:589px;top:580px;" width="16" height="15" viewBox="0 0 16 15"><path d="M1.5 1.5 H14.5 V13.5 H1.5 Z M1.5 8.5 H10.5 V1.5 M6.5 1.5 V8.5" fill="none" stroke="#666" stroke-width="1.3"/></svg>
<div class="r" style="left:621px;top:587px;width:6px;height:2px;background:#555;"></div>
<div class="r" style="left:631px;top:587px;width:100px;height:1px;background:#a0a0a0;"></div>
<div class="r" style="left:679px;top:582px;width:5px;height:11px;background:#777;"></div>
<div class="r" style="left:734px;top:587px;width:8px;height:2px;background:#555;"></div>
<div class="r" style="left:737px;top:584px;width:2px;height:8px;background:#555;"></div>
<div class="t" style="left:753.50px;top:581.87px;font-size:11.5px;color:#444444;">100%</div>
<svg class="r" style="left:670px;top:240.8px;" width="46" height="62.19999999999999" viewBox="0 0 46 62.19999999999999"><defs><filter id="bl1" x="-20%" y="-20%" width="140%" height="140%"><feGaussianBlur stdDeviation="1.2"/></filter></defs><g fill="#000" opacity="0.22" transform="translate(1.5,1.5)" filter="url(#bl1)"><circle cx="22" cy="22.0" r="19.5"/><path d="M13.13,34.10 L22.40,58.20 L31.13,33.90 Z"/></g><g fill="#e8893a"><circle cx="22" cy="22.0" r="19.5"/><path d="M13.13,34.10 L22.40,58.20 L31.13,33.90 Z"/></g></svg>
<svg class="r" style="left:684px;top:255px;" width="12" height="20" viewBox="0 0 12 20"><path d="M6.3 2 H10.5 V19 H6.3 V6.8 C5.2 7.6 3.6 8.2 2 8.6 V5.6 C3.9 5 5.3 3.6 6.3 2 Z" fill="#fff"/></svg>
<svg class="r" style="left:469px;top:30.799999999999997px;" width="61" height="46.0" viewBox="0 0 61 46.0"><defs><filter id="bl2" x="-20%" y="-20%" width="140%" height="140%"><feGaussianBlur stdDeviation="1.2"/></filter></defs><g fill="#000" opacity="0.22" transform="translate(1.5,1.5)" filter="url(#bl2)"><circle cx="22" cy="22.0" r="19.5"/><path d="M33.95,31.07 L57.00,22.20 L34.05,13.07 Z"/></g><g fill="#e8893a"><circle cx="22" cy="22.0" r="19.5"/><path d="M33.95,31.07 L57.00,22.20 L34.05,13.07 Z"/></g></svg>
<div class="t" style="left:291.20px;width:400px;text-align:center;top:41.88px;font-size:24px;color:#ffffff;font-weight:700;">2</div>
<svg class="r" style="left:582px;top:137.3px;" width="46" height="60.599999999999994" viewBox="0 0 46 60.599999999999994"><defs><filter id="bl3" x="-20%" y="-20%" width="140%" height="140%"><feGaussianBlur stdDeviation="1.2"/></filter></defs><g fill="#000" opacity="0.22" transform="translate(1.5,1.5)" filter="url(#bl3)"><circle cx="22" cy="36.599999999999994" r="19.5"/><path d="M30.91,24.54 L21.75,2.00 L12.91,24.67 Z"/></g><g fill="#e8893a"><circle cx="22" cy="36.599999999999994" r="19.5"/><path d="M30.91,24.54 L21.75,2.00 L12.91,24.67 Z"/></g></svg>
<div class="t" style="left:403.20px;width:400px;text-align:center;top:161.78px;font-size:24px;color:#ffffff;font-weight:700;">3</div>
</body></html>
